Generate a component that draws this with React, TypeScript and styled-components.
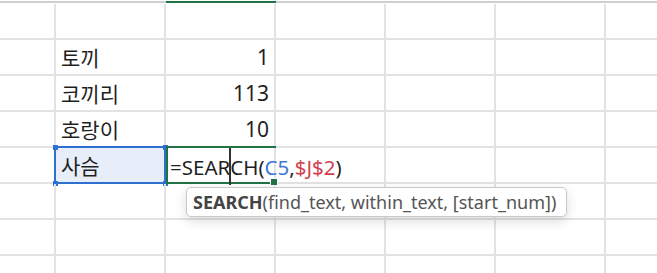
import React from "react";
import styled, { createGlobalStyle } from "styled-components";

const Global = createGlobalStyle`
  html, body { margin: 0; padding: 0; background: #ffffff; }
  body { font-family: "Noto Sans", "Noto Sans CJK KR", sans-serif; overflow: hidden; }
`;

const COLS = [56, 110, 110, 110, 110, 110, 110];
const LINE = "#e3e3e3";
const GREEN = "#217346";
const BLUE = "#2f6fd0";

const Sheet = styled.div`
  position: relative;
  width: 657px;
  height: 273px;
  overflow: hidden;
  background: #fff;
`;

const HeaderEdge = styled.div`
  display: grid;
  grid-template-columns: ${COLS.map((c) => c + "px").join(" ")};
  height: 4px;
  box-sizing: border-box;
  padding-top: 1px;
`;

const EdgeSeg = styled.div<{ $active?: boolean }>`
  height: 2px;
  background: ${(p) => (p.$active ? GREEN : "#cfcfcf")};
  margin-right: ${(p) => (p.$active ? "-1px" : "0")};
`;

const Grid = styled.div`
  display: grid;
  grid-template-columns: ${COLS.map((c) => c + "px").join(" ")};
  grid-auto-rows: 36px;
`;

const Cell = styled.div<{ $align?: "left" | "right"; $selected?: boolean; $editing?: boolean }>`
  position: relative;
  box-sizing: border-box;
  border-right: 2px solid ${LINE};
  border-bottom: 2px solid ${LINE};
  display: flex;
  align-items: flex-end;
  justify-content: ${(p) => (p.$align === "right" ? "flex-end" : "flex-start")};
  padding: 0 5px ${(p) => (p.$editing ? "1px" : "3px")} ${(p) => (p.$editing ? "4px" : "5px")};
  font-size: 21px;
  line-height: 28px;
  color: #1f1f1f;
  white-space: nowrap;
  overflow: visible;
  z-index: ${(p) => (p.$editing ? 2 : "auto")};
  background: ${(p) => (p.$selected ? "#e8eef9" : "transparent")};
`;

const Label = styled.span`
  font-family: "Noto Sans CJK KR", "Noto Sans", sans-serif;
  font-size: 21px;
`;

const SelectBox = styled.div`
  position: absolute;
  left: -2px;
  top: -2px;
  right: -2px;
  bottom: -2px;
  border: 2px solid ${BLUE};
  pointer-events: none;
`;

const Handle = styled.span<{ $x: "l" | "r"; $y: "t" | "b"; $color: string }>`
  position: absolute;
  width: 5px;
  height: 5px;
  background: ${(p) => p.$color};
  ${(p) => (p.$x === "l" ? "left: -3.5px;" : "right: -3.5px;")}
  ${(p) => (p.$y === "t" ? "top: -3.5px;" : "bottom: -3.5px;")}
`;

const EditBox = styled.div`
  position: absolute;
  left: 0px;
  top: -2px;
  right: -2px;
  bottom: -2px;
  border-top: 2px solid ${GREEN};
  border-bottom: 2px solid ${GREEN};
  border-left: 2px solid ${GREEN};
  pointer-events: none;
`;

const FillHandle = styled.span`
  position: absolute;
  right: -2px;
  bottom: -4px;
  width: 6px;
  height: 6px;
  background: ${GREEN};
  border: 1px solid #fff;
  box-sizing: content-box;
`;

const Formula = styled.span`
  position: relative;
  z-index: 2;
  font-family: "Noto Sans", sans-serif;
  font-size: 20.5px;
  color: #1f1f1f;
`;

const Ref = styled.span<{ $color: string }>`
  color: ${(p) => p.$color};
`;

const Caret = styled.span`
  display: inline-block;
  position: relative;
  width: 0;
  height: 0;
  &::after {
    content: "";
    position: absolute;
    left: -1px;
    top: -27px;
    width: 2px;
    height: 37px;
    background: #333;
  }
`;

const Tooltip = styled.div`
  position: absolute;
  left: 186px;
  top: 187px;
  width: 381px;
  height: 30px;
  box-sizing: border-box;
  border: 1px solid #c9c9c9;
  border-radius: 5px;
  background: #fff;
  box-shadow: 0 4px 12px rgba(0, 0, 0, 0.14);
  display: flex;
  align-items: center;
  padding-left: 6px;
  font-family: "Noto Sans", sans-serif;
  font-size: 18px;
  color: #555;
  white-space: nowrap;
  z-index: 5;
`;

const FnName = styled.b`
  font-weight: 700;
  color: #444;
`;

type Row = { label?: string; value?: string };
const rows: Row[] = [
  {},
  { label: "토끼", value: "1" },
  { label: "코끼리", value: "113" },
  { label: "호랑이", value: "10" },
  { label: "사슴" },
  {},
  {},
  {},
];

export default function App() {
  return (
    <>
      <Global />
      <Sheet>
        <HeaderEdge>
          {COLS.map((_, i) => (
            <EdgeSeg key={i} $active={i === 2} />
          ))}
        </HeaderEdge>
        <Grid>
          {rows.map((r, ri) =>
            COLS.map((_, ci) => {
              const key = `${ri}-${ci}`;
              if (ri === 4 && ci === 1) {
                return (
                  <Cell key={key} $selected>
                    <SelectBox>
                      <Handle $x="l" $y="t" $color={BLUE} />
                      <Handle $x="r" $y="t" $color={BLUE} />
                      <Handle $x="l" $y="b" $color={BLUE} />
                      <Handle $x="r" $y="b" $color={BLUE} />
                    </SelectBox>
                    <Label>{r.label}</Label>
                  </Cell>
                );
              }
              if (ri === 4 && ci === 2) {
                return (
                  <Cell key={key} $editing>
                    <EditBox>
                      <FillHandle />
                    </EditBox>
                    <Formula>
                      =SEAR
                      <Caret />
                      CH(<Ref $color="#3b78d8">C5</Ref>,<Ref $color="#d2404f">$J$2</Ref>)
                    </Formula>
                  </Cell>
                );
              }
              if (ci === 1 && r.label) {
                return (
                  <Cell key={key}>
                    <Label>{r.label}</Label>
                  </Cell>
                );
              }
              if (ci === 2 && r.value) {
                return (
                  <Cell key={key} $align="right">
                    {r.value}
                  </Cell>
                );
              }
              return <Cell key={key} />;
            })
          )}
        </Grid>
        <Tooltip>
          <FnName>SEARCH</FnName>(find_text, within_text, [start_num])
        </Tooltip>
      </Sheet>
    </>
  );
}
